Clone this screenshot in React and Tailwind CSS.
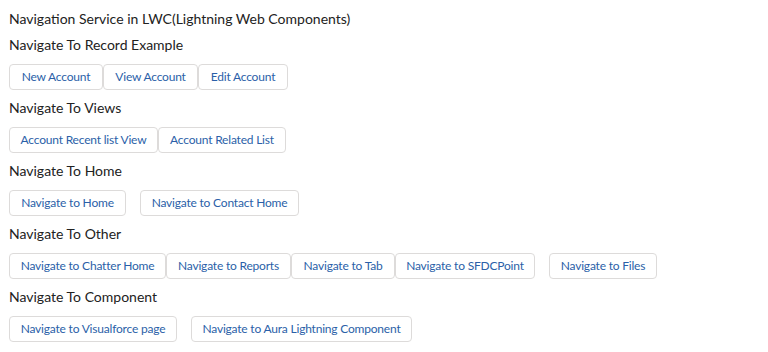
const sections = [
  {
    title: "Navigate To Record Example",
    groups: [[["New Account", "w-[94px]"], ["View Account", "w-[95px]"], ["Edit Account", "w-[90px]"]]],
  },
  {
    title: "Navigate To Views",
    groups: [[["Account Recent list View", "w-[149px]"], ["Account Related List", "w-[128px]"]]],
  },
  {
    title: "Navigate To Home",
    groups: [[["Navigate to Home", "w-[117px]"]], [["Navigate to Contact Home", "w-[159px]"]]],
  },
  {
    title: "Navigate To Other",
    groups: [
      [
        ["Navigate to Chatter Home", "w-[157px]"],
        ["Navigate to Reports", "w-[125px]"],
        ["Navigate to Tab", "w-[104px]"],
        ["Navigate to SFDCPoint", "w-[140px]"],
      ],
      [["Navigate to Files", "w-[108px]"]],
    ],
  },
  {
    title: "Navigate To Component",
    groups: [[["Navigate to Visualforce page", "w-[168px]"]], [["Navigate to Aura Lightning Component", "w-[221px]"]]],
  },
];

function Btn({ label, w }) {
  return (
    <button
      className={`${w} h-[26px] bg-white border border-[#dddbda] rounded-[4px] text-[12px] leading-none tracking-[-0.2px] text-[#2b5fa8] whitespace-nowrap text-center`}
    >
      {label}
    </button>
  );
}

export default function App() {
  return (
    <div className="w-[768px] h-[352px] bg-white pl-[9px] pt-[9px] text-[#222] font-['Lato',sans-serif] overflow-hidden">
      <h1 className="text-[14px] leading-[20px] mb-[6px]">Navigation Service in LWC(Lightning Web Components)</h1>
      {sections.map((s) => (
        <div key={s.title} className="mb-[8px]">
          <h2 className="text-[14px] leading-[20px] mb-[9px]">{s.title}</h2>
          <div className="flex gap-[14px]">
            {s.groups.map((g, i) => (
              <div key={i} className="flex">
                {g.map(([b, w]) => (
                  <Btn key={b} label={b} w={w} />
                ))}
              </div>
            ))}
          </div>
        </div>
      ))}
    </div>
  );
}
